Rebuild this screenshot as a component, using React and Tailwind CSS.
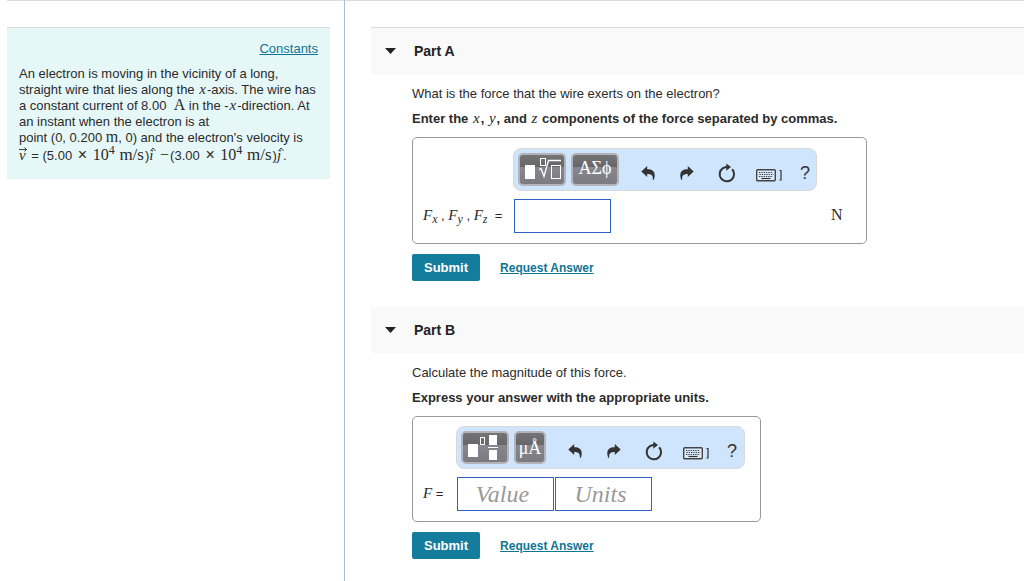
import React, { useState } from "react";

const Var = ({ children }) => (
  <i className="font-['Liberation_Serif',serif] text-[15px] leading-0 font-normal">
    {children}
  </i>
);

const InlineVar = ({ children }) => (
  <span className="px-px">
    <Var>{children}</Var>
  </span>
);

const Rm = ({ children }) => (
  <span className="font-['Liberation_Serif',serif] text-[16px] leading-0">
    {children}
  </span>
);

const Sub = ({ children }) => (
  <sub className="font-['Liberation_Serif',serif] text-[12px] italic">
    {children}
  </sub>
);

const Accent = ({ children, vector }) => (
  <span className="relative mr-0.5">
    <Var>{children}</Var>
    <svg
      viewBox="0 0 8 5"
      className="absolute -top-px left-0 h-[5px] w-2"
      fill="none"
      stroke="currentColor"
      strokeWidth=".9"
      aria-hidden="true"
    >
      {vector ? (
        <path d="M0 2.500h7.500M5.500 .5l2 2-2 2" />
      ) : (
        <path d="M1.500 4l2.500-3 2.500 3" />
      )}
    </svg>
  </span>
);

const Velocity = ({ value, power }) => (
  <>
    ({value}{" "}
    <span className="mx-0.5 text-[16px] leading-0">×</span>{" "}
    <Rm>10</Rm>
    <sup className="font-['Liberation_Serif',serif] text-[12px]">{power}</sup>{" "}
    <span className="px-px font-['Liberation_Serif',serif] text-[17px] leading-0">
      m/s
    </span>
    )
  </>
);

const UndoIcon = ({ flip }) => (
  <svg
    viewBox="0 0 14 14"
    className={flip ? "size-3.5 -scale-x-100" : "size-3.5"}
    fill="#333"
    aria-hidden="true"
  >
    <path d="M6.200 0v3.300C11 3.300 13.700 5.200 13.700 9.200c0 2-.5 3.500-1.200 4.800h-.7c.4-3.800-.8-5.900-5.600-5.900v3L.3 5.500z" />
  </svg>
);

const ResetIcon = () => (
  <svg viewBox="0 0 18 20" className="h-5 w-[18px]" aria-hidden="true">
    <path
      d="M14.200 6.300A7.200 7.200 0 1 1 5 5.100Q7 4 9.500 4"
      fill="none"
      stroke="#333"
      strokeWidth="2"
    />
    <path d="M8.300 .5v7.200L13 4z" fill="#333" />
  </svg>
);

const KeyboardIcon = () => (
  <svg viewBox="0 0 27 14" className="h-3.5 w-[27px]" aria-hidden="true">
    <rect x=".7" y="1.700" width="18.600" height="11" rx="1" fill="#dcecfd" stroke="#444" strokeWidth="1.400" />
    <path
      d="M3 4.500h14M3.500 6.500h14M3 8.500h14"
      stroke="#333"
      strokeWidth="1.200"
      strokeDasharray="1.300 1"
    />
    <path d="M5.500 10.500h9" stroke="#333" strokeWidth="1.200" />
    <path d="M23.500 2.500h1.500v9.500h-1.500" fill="none" stroke="#333" strokeWidth="1.200" />
  </svg>
);

const RootIcon = () => (
  <svg viewBox="0 0 44 29" className="h-full w-full" fill="none" stroke="#fff" aria-hidden="true">
    <rect x="5" y="10" width="10" height="14" fill="#fff" stroke="none" />
    <rect x="20.500" y="3.500" width="5" height="7" />
    <path d="M19 14.500l2-1 3 8L28.500 5.500H41" strokeWidth="1.300" />
    <rect x="31.500" y="10.500" width="9" height="13" />
  </svg>
);

const FractionIcon = () => (
  <svg viewBox="0 0 44 29" className="h-full w-full" fill="#fff" aria-hidden="true">
    <rect x="5" y="11" width="10" height="13" />
    <rect x="17.500" y="4.500" width="4" height="7" fill="none" stroke="#fff" />
    <rect x="26" y="2" width="8" height="10" />
    <rect x="25" y="14" width="10" height="1" />
    <rect x="26" y="17" width="8" height="10" />
  </svg>
);

const PadButton = ({ label, width, children }) => (
  <button
    type="button"
    aria-label={label}
    className={`${width} flex h-[33px] items-center justify-center rounded-[5px] border-2 border-[#b4b4b8] bg-[linear-gradient(#747476,#666668_42%,#88868f_42%,#7c7b80)] font-['Liberation_Serif',serif] text-white`}
  >
    {children}
  </button>
);

const Toolbar = ({ children }) => (
  <div
    role="toolbar"
    className="flex h-[43px] items-center rounded-lg border border-[#d9d9dc] bg-[#cfe5fe] pr-[7px] pl-1"
  >
    <div className="flex gap-[5px]">{children}</div>
    <div className="ml-[22px] flex items-center pt-1.5 text-[#333]">
      <button type="button" aria-label="Undo">
        <UndoIcon />
      </button>
      <button type="button" aria-label="Redo" className="ml-[25px]">
        <UndoIcon flip />
      </button>
      <button type="button" aria-label="Reset" className="ml-6">
        <ResetIcon />
      </button>
      <button type="button" aria-label="Keyboard" className="ml-5 pt-1">
        <KeyboardIcon />
      </button>
      <button
        type="button"
        aria-label="Help"
        className="ml-[17px] text-[18px] leading-5"
      >
        ?
      </button>
    </div>
  </div>
);

const Part = ({ title, className, children }) => {
  const [open, setOpen] = useState(true);

  return (
    <section>
      <h2 className={`${className} bg-[#f9f9f9]`}>
        <button
          type="button"
          aria-expanded={open}
          onClick={() => setOpen(!open)}
          className="flex h-[46px] w-full items-center gap-[18px] pl-3.5 text-[14px] font-bold text-[#222]"
        >
          <svg viewBox="0 0 11 6" className="h-1.5 w-[11px]" fill="#222" aria-hidden="true">
            <path d="M0 0h11L5.500 6z" />
          </svg>
          {title}
        </button>
      </h2>
      {open && <div className="pt-2.5 pb-[26px] pl-[41px]">{children}</div>}
    </section>
  );
};

const Actions = () => (
  <div className="mt-2.5 flex items-center gap-5">
    <button
      type="submit"
      className="h-[27px] rounded-xs bg-[#147c9c] px-3 text-[13px] font-bold text-white"
    >
      Submit
    </button>
    <a href="#request" className="text-[12px] font-bold text-[#0f7596] underline">
      Request Answer
    </a>
  </div>
);

const inputClass =
  "h-[34px] w-[97px] border border-[#2f62c9] bg-white pr-1.5 text-center font-['Liberation_Serif',serif] text-[24px] placeholder:text-[#999] placeholder:italic focus:outline-none";

export default function App() {
  const handleSubmit = (e) => e.preventDefault();

  return (
    <div className="flex min-h-screen bg-white font-['Liberation_Sans',Arial,sans-serif] text-[13px] text-[#2b2b2b]">
      <aside className="flex w-[345px] shrink-0 flex-col border-r border-[#a9bcd3] pl-[7px]">
        <div className="border-t border-[#dcdcdc] pt-[26px] pr-3.5">
          <div className="border-t border-[#d5dfdf] bg-[#e6f7f8] px-3 pt-3 pb-3.5">
            <div className="text-right leading-[18px]">
              <a href="#constants" className="text-[#0f7596] underline">
                Constants
              </a>
            </div>
            <p className="mt-2 leading-4 whitespace-nowrap">
              An electron is moving in the vicinity of a long,
              <br />
              straight wire that lies along the <InlineVar>x</InlineVar>-axis.
              The wire has
              <br />a constant current of 8.00 &nbsp;<Rm>A</Rm> in the -
              <InlineVar>x</InlineVar>-direction. At
              <br />
              an instant when the electron is at
              <br />
              point (0, 0.200 <Rm>m</Rm>, 0) and the electron's velocity is
            </p>
            <p className="mt-px leading-[18px] whitespace-nowrap">
              <Accent vector>v</Accent> = <Velocity value="5.00" power="4" />
              <Accent>i</Accent>{" "}
              <span className="px-px">
                <Rm>−</Rm>
              </span>
              <Velocity value="3.00" power="4" />
              <Accent>j</Accent>.
            </p>
          </div>
        </div>
      </aside>

      <main className="min-w-0 flex-1 border-t border-[#dcdcdc] pt-[26px] pl-[26px]">
        <Part title="Part A" className="border-t border-[#dcdcdc]">
          <p className="leading-5">
            What is the force that the wire exerts on the electron?
          </p>
          <form onSubmit={handleSubmit}>
            <p className="mt-[5px] leading-5 font-bold">
              Enter the <InlineVar>x</InlineVar>, <InlineVar>y</InlineVar>, and{" "}
              <InlineVar>z</InlineVar> components of the force separated by
              commas.
            </p>
            <div className="mt-2 grid w-fit grid-cols-[90px_304px_auto] items-center gap-y-2 rounded-[5px] border border-[#999] py-2.5 pr-[23px] pl-2.5">
              <div className="col-start-2">
                <Toolbar>
                  <PadButton label="Templates" width="w-12">
                    <RootIcon />
                  </PadButton>
                  <PadButton label="Symbols" width="w-12">
                    <span className="pb-1 text-[18px] leading-none">ΑΣϕ</span>
                  </PadButton>
                </Toolbar>
              </div>
              <label htmlFor="force" className="col-start-1 whitespace-nowrap">
                <Var>F</Var>
                <Sub>x</Sub> , <Var>F</Var>
                <Sub>y</Sub> , <Var>F</Var>
                <Sub>z</Sub> &nbsp;=
              </label>
              <div className="pl-px">
                <input id="force" type="text" className={inputClass} />
              </div>
              <span className="pl-[14px]">
                <Rm>N</Rm>
              </span>
            </div>
            <Actions />
          </form>
        </Part>

        <Part title="Part B" className="">
          <p className="leading-5">Calculate the magnitude of this force.</p>
          <form onSubmit={handleSubmit}>
            <p className="mt-[5px] leading-5 font-bold">
              Express your answer with the appropriate units.
            </p>
            <div className="mt-2 grid w-fit grid-cols-[33px_auto] items-center gap-y-2 rounded-[5px] border border-[#999] pt-[9px] pr-[15px] pb-2.5 pl-2.5">
              <div className="col-start-2">
                <Toolbar>
                  <PadButton label="Templates" width="w-12">
                    <FractionIcon />
                  </PadButton>
                  <PadButton label="Units" width="w-8">
                    <span className="text-[18px] leading-none">μÅ</span>
                  </PadButton>
                </Toolbar>
              </div>
              <label htmlFor="value" className="col-start-1 whitespace-nowrap">
                <Var>F</Var> =
              </label>
              <div className="flex gap-px pl-px">
                <input id="value" type="text" placeholder="Value" className={inputClass} />
                <input aria-label="Units" type="text" placeholder="Units" className={inputClass} />
              </div>
            </div>
            <Actions />
          </form>
        </Part>
      </main>
    </div>
  );
}
